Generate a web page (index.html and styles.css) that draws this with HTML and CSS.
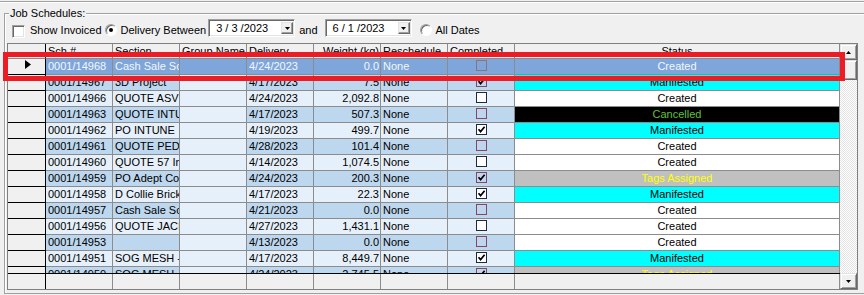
FILE: index.html
```html
<!DOCTYPE html>
<html>
<head>
<meta charset="utf-8">
<title>Job Schedules</title>
<link rel="stylesheet" href="styles.css">
</head>
<body>
<div class="topline"></div>
<fieldset class="group">
  <legend>Job Schedules:</legend>
  <div class="filters">
    <span class="cbx"></span><span class="lbl lbl-inv">Show Invoiced</span>
    <span class="radio on r1"></span><span class="lbl lbl-db">Delivery Between</span>
    <div class="combo c1"><span class="combo-text">3 / 3 /2023</span><span class="combo-btn"><svg class="arr" viewBox="0 0 5 3"><path d="M0 0H5L2.5 3Z"/></svg></span></div>
    <span class="lbl lbl-and">and</span>
    <div class="combo c2"><span class="combo-text">6 / 1 /2023</span><span class="combo-btn"><svg class="arr" viewBox="0 0 5 3"><path d="M0 0H5L2.5 3Z"/></svg></span></div>
    <span class="radio r2"></span><span class="lbl lbl-all">All Dates</span>
  </div>

  <div class="grid">
    <div class="grid-main">
      <div class="hdr">
        <div class="h rh"></div>
        <div class="h">Sch #</div>
        <div class="h">Section</div>
        <div class="h">Group Name</div>
        <div class="h">Delivery</div>
        <div class="h num">Weight (kg)</div>
        <div class="h">Reschedule</div>
        <div class="h">Completed</div>
        <div class="h st">Status</div>
      </div>
      <div class="body">
        <div class="row sel"><div class="c rh"><svg class="cur" viewBox="0 0 6 9"><path d="M0 0L6 4.5L0 9Z"/></svg></div><div class="c">0001/14968</div><div class="c">Cash Sale Scr</div><div class="c gn"></div><div class="c">4/24/2023</div><div class="c num">0.0</div><div class="c">None</div><div class="c chk"><span class="box"></span></div><div class="c st">Created</div></div>
        <div class="row dark"><div class="c rh"></div><div class="c">0001/14967</div><div class="c">3D Project</div><div class="c gn"></div><div class="c">4/17/2023</div><div class="c num">7.5</div><div class="c">None</div><div class="c chk"><span class="box"><svg class="tick" viewBox="0 0 9 9"><path d="M1.5 4.2L3.6 6.6L7.6 1.8"/></svg></span></div><div class="c st man">Manifested</div></div>
        <div class="row light"><div class="c rh"></div><div class="c">0001/14966</div><div class="c">QUOTE ASV</div><div class="c gn"></div><div class="c">4/24/2023</div><div class="c num">2,092.8</div><div class="c">None</div><div class="c chk"><span class="box"></span></div><div class="c st cre">Created</div></div>
        <div class="row dark"><div class="c rh"></div><div class="c">0001/14963</div><div class="c">QUOTE INTU</div><div class="c gn"></div><div class="c">4/17/2023</div><div class="c num">507.3</div><div class="c">None</div><div class="c chk"><span class="box"></span></div><div class="c st can">Cancelled</div></div>
        <div class="row light"><div class="c rh"></div><div class="c">0001/14962</div><div class="c">PO INTUNE</div><div class="c gn"></div><div class="c">4/19/2023</div><div class="c num">499.7</div><div class="c">None</div><div class="c chk"><span class="box"><svg class="tick" viewBox="0 0 9 9"><path d="M1.5 4.2L3.6 6.6L7.6 1.8"/></svg></span></div><div class="c st man">Manifested</div></div>
        <div class="row dark"><div class="c rh"></div><div class="c">0001/14961</div><div class="c">QUOTE PED</div><div class="c gn"></div><div class="c">4/28/2023</div><div class="c num">101.4</div><div class="c">None</div><div class="c chk"><span class="box"></span></div><div class="c st cre">Created</div></div>
        <div class="row light"><div class="c rh"></div><div class="c">0001/14960</div><div class="c">QUOTE 57 In</div><div class="c gn"></div><div class="c">4/14/2023</div><div class="c num">1,074.5</div><div class="c">None</div><div class="c chk"><span class="box"></span></div><div class="c st cre">Created</div></div>
        <div class="row dark"><div class="c rh"></div><div class="c">0001/14959</div><div class="c">PO Adept Co</div><div class="c gn"></div><div class="c">4/24/2023</div><div class="c num">200.3</div><div class="c">None</div><div class="c chk"><span class="box"><svg class="tick" viewBox="0 0 9 9"><path d="M1.5 4.2L3.6 6.6L7.6 1.8"/></svg></span></div><div class="c st tag">Tags Assigned</div></div>
        <div class="row light"><div class="c rh"></div><div class="c">0001/14958</div><div class="c">D Collie Brick</div><div class="c gn"></div><div class="c">4/17/2023</div><div class="c num">22.3</div><div class="c">None</div><div class="c chk"><span class="box"><svg class="tick" viewBox="0 0 9 9"><path d="M1.5 4.2L3.6 6.6L7.6 1.8"/></svg></span></div><div class="c st man">Manifested</div></div>
        <div class="row dark"><div class="c rh"></div><div class="c">0001/14957</div><div class="c">Cash Sale Scr</div><div class="c gn"></div><div class="c">4/21/2023</div><div class="c num">0.0</div><div class="c">None</div><div class="c chk"><span class="box"></span></div><div class="c st cre">Created</div></div>
        <div class="row light"><div class="c rh"></div><div class="c">0001/14956</div><div class="c">QUOTE JACI</div><div class="c gn"></div><div class="c">4/27/2023</div><div class="c num">1,431.1</div><div class="c">None</div><div class="c chk"><span class="box"></span></div><div class="c st cre">Created</div></div>
        <div class="row dark"><div class="c rh"></div><div class="c">0001/14953</div><div class="c"></div><div class="c gn"></div><div class="c">4/13/2023</div><div class="c num">0.0</div><div class="c">None</div><div class="c chk"><span class="box"></span></div><div class="c st cre">Created</div></div>
        <div class="row light"><div class="c rh"></div><div class="c">0001/14951</div><div class="c">SOG MESH -</div><div class="c gn"></div><div class="c">4/17/2023</div><div class="c num">8,449.7</div><div class="c">None</div><div class="c chk"><span class="box"><svg class="tick" viewBox="0 0 9 9"><path d="M1.5 4.2L3.6 6.6L7.6 1.8"/></svg></span></div><div class="c st man">Manifested</div></div>
        <div class="row dark"><div class="c rh"></div><div class="c">0001/14950</div><div class="c">SOG MESH</div><div class="c gn"></div><div class="c">4/24/2023</div><div class="c num">2,745.5</div><div class="c">None</div><div class="c chk"><span class="box"><svg class="tick" viewBox="0 0 9 9"><path d="M1.5 4.2L3.6 6.6L7.6 1.8"/></svg></span></div><div class="c st tag">Tags Assigned</div></div>
      </div>
      <div class="foot">
        <div class="f rh"></div><div class="f"></div><div class="f"></div><div class="f"></div><div class="f"></div><div class="f"></div><div class="f"></div><div class="f"></div><div class="f st"></div>
      </div>
    </div>
    <div class="vscroll">
      <div class="sb-btn"><svg class="arr" viewBox="0 0 5 3"><path d="M0 3H5L2.5 0Z"/></svg></div>
      <div class="sb-thumb"></div>
      <div class="sb-track"></div>
      <div class="sb-btn"><svg class="arr" viewBox="0 0 5 3"><path d="M0 0H5L2.5 3Z"/></svg></div>
    </div>
  </div>
</fieldset>
<div class="highlight"></div>
</body>
</html>
```

FILE: styles.css
```css
html, body {
  overflow: hidden;
}
body {
  margin: 0;
  background: #f0f0f0;
  font-family: "Liberation Sans", Arial, sans-serif;
  font-size: 11px;
  color: #000;
}

.topline {
  margin-top: 1px;
  border-top: 1px solid #a0a0a0;
  border-bottom: 1px solid #fff;
}

.group {
  box-sizing: border-box;
  width: 900px;
  min-width: 0;
  margin: 4px 0 0 4px;
  padding: 0 0 3px 0;
  border: 1px solid #a0a0a0;
  box-shadow: inset 1px 1px 0 #fff;
}
.group legend {
  margin-left: 4px;
  padding: 0 1px;
  line-height: 13px;
  background: #f0f0f0;
}

/* filter row */
.filters {
  display: flex;
  align-items: flex-start;
  height: 18px;
  margin: -1px 0 0 7px;
}
.cbx {
  flex: none;
  box-sizing: border-box;
  width: 13px;
  height: 13px;
  margin-top: 6px;
  background: #fff;
  border: 1px solid;
  border-color: #a0a0a0 #fff #fff #a0a0a0;
  box-shadow: inset 1px 1px #696969, inset -1px -1px #e3e3e3;
}
.lbl {
  margin-top: 5px;
  line-height: 13px;
  white-space: nowrap;
}
.lbl-inv { margin-left: 5px; }
.lbl-db { margin-left: 4px; }
.lbl-and { margin-left: 4px; }
.lbl-all { margin-left: 4px; }
.radio {
  flex: none;
  box-sizing: border-box;
  width: 12px;
  height: 12px;
  margin-top: 5px;
  border-radius: 50%;
  background: #fff;
  border: 1px solid;
  border-color: #a0a0a0 #fff #fff #a0a0a0;
  box-shadow: inset 1px 1px #696969;
  display: flex;
  align-items: center;
  justify-content: center;
}
.radio.on::after {
  content: "";
  width: 4px;
  height: 4px;
  border-radius: 50%;
  background: #000;
}
.r1 { margin-left: 3px; }
.r2 { margin-left: 8px; }

.combo {
  flex: none;
  box-sizing: border-box;
  display: flex;
  align-items: center;
  width: 87px;
  height: 18px;
  padding-left: 7px;
  background: #fff;
  border: 1px solid;
  border-color: #a0a0a0 #fff #fff #a0a0a0;
  box-shadow: inset 1px 1px #696969, inset -1px -1px #e3e3e3;
}
.c1 { margin-left: 2px; }
.c2 { margin-left: 7px; }
.combo-text {
  line-height: 14px;
  white-space: pre;
}
.combo-btn {
  box-sizing: border-box;
  width: 12px;
  height: 12px;
  margin: 0 1px 0 auto;
  background: #f0f0f0;
  border: 1px solid;
  border-color: #e3e3e3 #696969 #696969 #e3e3e3;
  box-shadow: inset -1px -1px #a0a0a0;
  display: flex;
  align-items: center;
  justify-content: center;
}
.arr {
  width: 5px;
  height: 3px;
  display: block;
}
.arr path { fill: #000; }

/* grid */
.grid {
  display: flex;
  width: max-content;
  margin: 6px 0 0 2px;
  border: 1px solid #808080;
}
.grid-main {
  width: 832px;
}
.hdr, .row, .foot {
  display: flex;
}
.h, .c, .f {
  flex: none;
  box-sizing: border-box;
  width: 67px;
  border-right: 1px solid #8c8c8c;
  white-space: nowrap;
  overflow: hidden;
}
.h {
  height: 15px;
  padding-left: 2px;
  line-height: 14px;
  border-bottom: 1px solid #8c8c8c;
  background: #f0f0f0;
}
.h.num {
  text-align: right;
  padding: 0 1px 0 0;
}
.h.st, .c.st, .f.st {
  width: 325px;
  text-align: center;
  padding: 0;
}
.h.rh, .c.rh, .f.rh {
  width: 38px;
  padding: 0;
  background: #f0f0f0;
  border-right-color: #000;
}

.body {
  height: 214px;
  overflow: hidden;
}
.row {
  height: 16px;
}
.row.dark { background: #bdd7ee; }
.row.light { background: #e6f0fa; }
.row.sel { background: #7fa6db; color: #f4f6fa; }
.c {
  height: 16px;
  padding-left: 2px;
  line-height: 15px;
  border-bottom: 1px solid #8c8c8c;
}
.c.rh {
  border-bottom-color: #000;
  color: #000;
}
.row.sel .c.rh {
  padding: 1px 0 0 17px;
}
.cur {
  display: block;
  width: 6px;
  height: 9px;
}
.cur path { fill: #000; }
.c.gn { background: #e6f0fa; }
.row.sel .c.gn { background: transparent; }
.c.num {
  text-align: right;
  padding: 0 1px 0 0;
}
.c.chk {
  display: flex;
  justify-content: center;
  align-items: flex-start;
  padding: 1px 0 0 0;
}
.box {
  box-sizing: border-box;
  width: 11px;
  height: 11px;
  border: 1px solid #1f2940;
  display: flex;
  align-items: center;
  justify-content: center;
}
.row.light .box { background: #fff; }
.row.dark .box { border-color: #864565; }
.row.sel .box { border-color: #8c7478; }
.tick {
  display: block;
  width: 9px;
  height: 9px;
}
.tick path {
  fill: none;
  stroke: #000;
  stroke-width: 1.7;
}
.c.cre { background: #fff; color: #000; }
.c.man { background: #00ffff; color: #000; }
.c.can { background: #000; color: #62c13c; }
.c.tag { background: #c0c0c0; color: #ffff00; }

.foot {
  border-top: 1px solid #000;
}
.f {
  height: 15px;
  background: #f0f0f0;
}

/* scrollbar */
.vscroll {
  width: 17px;
  display: flex;
  flex-direction: column;
}
.sb-btn, .sb-thumb {
  box-sizing: border-box;
  flex: none;
  background: #f0f0f0;
  border: 1px solid;
  border-color: #e3e3e3 #696969 #696969 #e3e3e3;
  box-shadow: inset 1px 1px #fff, inset -1px -1px #a0a0a0;
}
.sb-btn {
  height: 16px;
  display: flex;
  align-items: center;
  justify-content: center;
}
.sb-thumb {
  height: 20px;
}
.sb-track {
  flex: 1;
  background: repeating-conic-gradient(#ffffff 0 25%, #e2e2e2 0 50%) 0 0 / 2px 2px;
}

/* annotation overlay */
.highlight {
  position: absolute;
  left: 3px;
  top: 52px;
  width: 842px;
  height: 29px;
  box-sizing: border-box;
  border: 5px solid #ed1c24;
  pointer-events: none;
}
```
